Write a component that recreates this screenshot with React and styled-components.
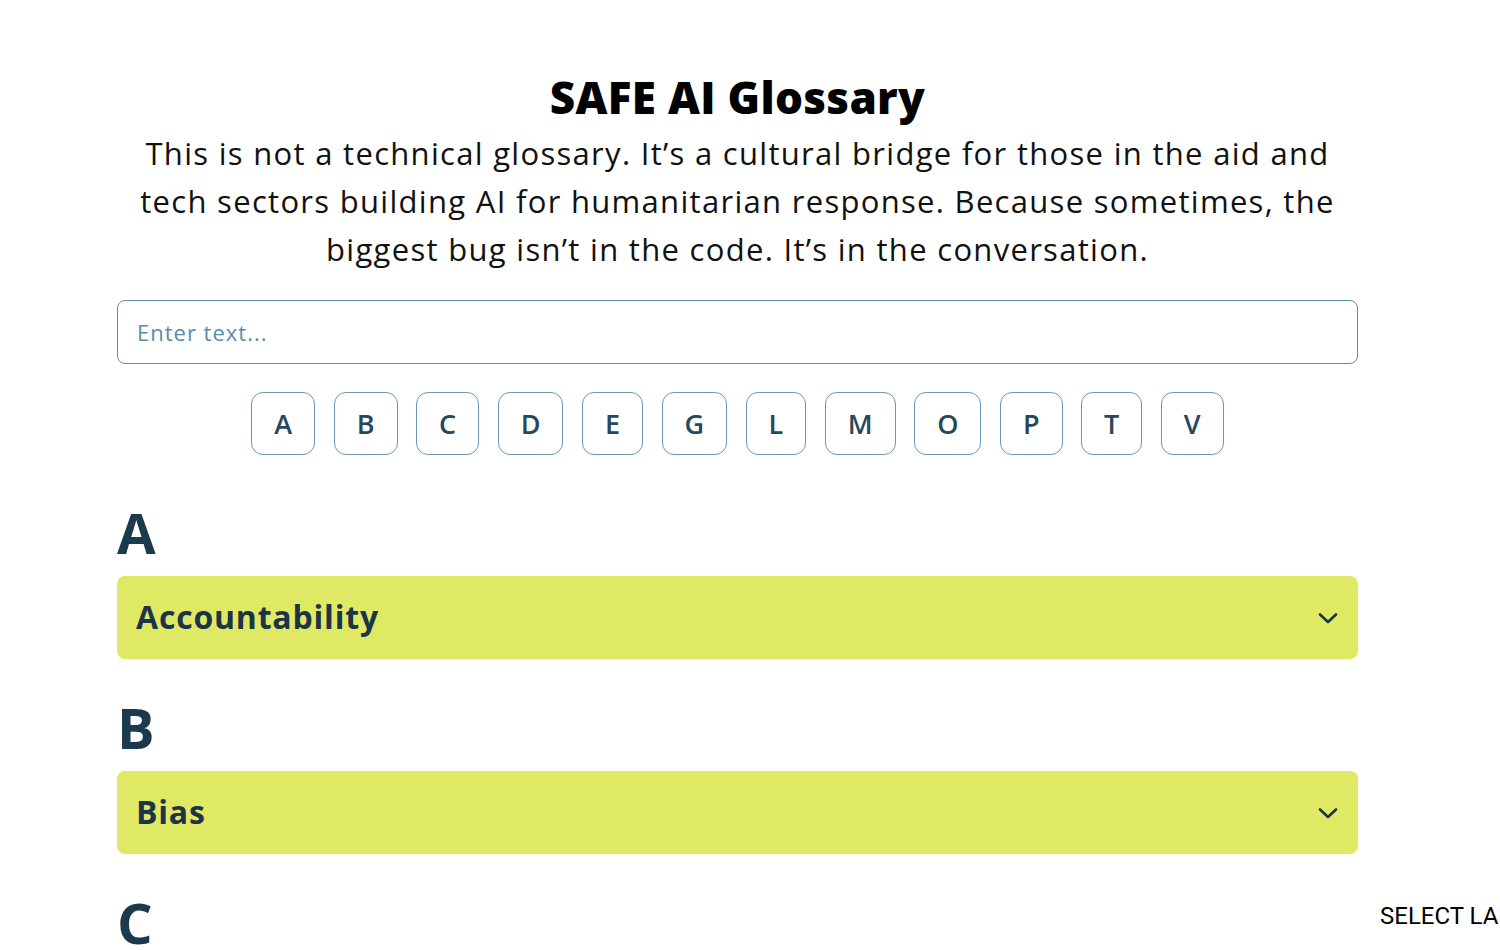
import React, { useState } from "react";
import styled, { createGlobalStyle } from "styled-components";

const Global = createGlobalStyle`
  html, body { margin: 0; padding: 0; background: #fff; }
  body { font-family: "Open Sans", "DejaVu Sans", sans-serif; overflow: hidden; }
  * { box-sizing: border-box; }
`;

const Page = styled.div`
  position: relative;
  width: 1500px;
  height: 950px;
  overflow: hidden;
  padding: 71px 142px 0 117px;
`;

const Title = styled.h1`
  margin: 0;
  text-align: center;
  font-size: 44px;
  line-height: 52px;
  font-weight: 800;
  color: #000;
  letter-spacing: 0.3px;
`;

const Intro = styled.p`
  margin: 6px 0 0;
  text-align: center;
  font-size: 31px;
  line-height: 48px;
  font-weight: 400;
  color: #111;
  letter-spacing: 1.3px;
`;

const Search = styled.input`
  display: block;
  width: 100%;
  height: 64px;
  margin-top: 27px;
  border: 1.5px solid #5d8ea8;
  border-radius: 8px;
  padding: 0 19px;
  font-family: inherit;
  font-size: 22px;
  letter-spacing: 1px;
  color: #1c3a4d;
  outline: none;
  &::placeholder { color: #5a8ca8; }
`;

const Letters = styled.div`
  display: flex;
  justify-content: center;
  gap: 18.5px;
  margin-top: 28px;
`;

const LetterBtn = styled.button`
  height: 63px;
  min-width: 58px;
  padding: 0 22px;
  border: 1.5px solid #6b98b0;
  border-radius: 12px;
  background: #fff;
  font-family: inherit;
  font-size: 27px;
  font-weight: 600;
  color: #27475c;
  cursor: pointer;
`;

const Section = styled.section`
  margin-top: ${(p) => (p.$first ? "43px" : "34px")};
`;

const SectionLetter = styled.h2`
  margin: 0 0 10px;
  font-size: 56px;
  line-height: 68px;
  font-weight: 700;
  color: #1b3a4e;
`;

const Item = styled.div`
  background: #e0e964;
  border-radius: 8px;
  height: 83px;
  padding: 0 18px 0 19px;
  display: flex;
  align-items: center;
  justify-content: space-between;
  cursor: pointer;
`;

const ItemTitle = styled.span`
  font-size: 32px;
  font-weight: 700;
  letter-spacing: 0.8px;
  color: #1b3448;
  margin-top: -3px;
`;

const Chevron = () => (
  <svg width="24" height="24" viewBox="0 0 24 24" fill="none" stroke="#1b3448" strokeWidth="2.6" strokeLinecap="round" strokeLinejoin="round">
    <path d="M4 8.5l8 7.5 8-7.5" />
  </svg>
);

const Lang = styled.div`
  position: absolute;
  left: 1380px;
  top: 902px;
  font-family: Roboto, "Liberation Sans", sans-serif;
  font-size: 24px;
  color: #000;
  white-space: nowrap;
`;

const letters = ["A", "B", "C", "D", "E", "G", "L", "M", "O", "P", "T", "V"];
const sections = [
  { letter: "A", items: ["Accountability"] },
  { letter: "B", items: ["Bias"] },
  { letter: "C", items: [] },
];

export default function App() {
  const [q, setQ] = useState("");
  return (
    <Page>
      <Global />
      <Title>SAFE AI Glossary</Title>
      <Intro>
        This is not a technical glossary. It’s a cultural bridge for those in the aid and
        <br />
        tech sectors building AI for humanitarian response. Because sometimes, the
        <br />
        biggest bug isn’t in the code. It’s in the conversation.
      </Intro>
      <Search placeholder="Enter text..." value={q} onChange={(e) => setQ(e.target.value)} />
      <Letters>
        {letters.map((l) => (
          <LetterBtn key={l}>{l}</LetterBtn>
        ))}
      </Letters>
      {sections.map((s, i) => (
        <Section key={s.letter} $first={i === 0}>
          <SectionLetter>{s.letter}</SectionLetter>
          {s.items.map((it) => (
            <Item key={it}>
              <ItemTitle>{it}</ItemTitle>
              <Chevron />
            </Item>
          ))}
        </Section>
      ))}
      <Lang>SELECT LANGUAGE</Lang>
    </Page>
  );
}
